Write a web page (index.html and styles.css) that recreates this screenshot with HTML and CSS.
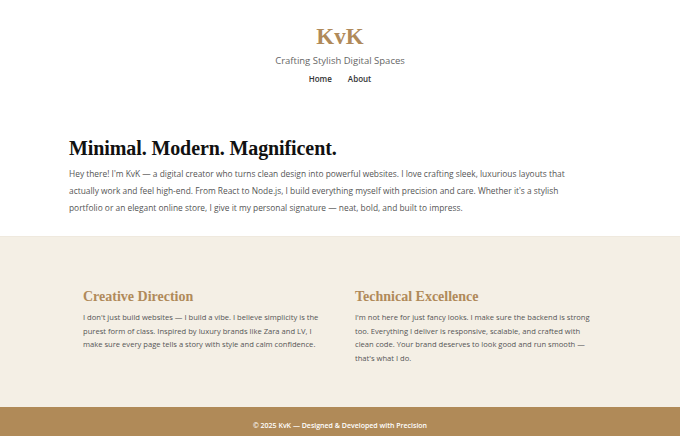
FILE: index.html
```html
<!DOCTYPE html>
<html lang="en">
<head>
<meta charset="utf-8">
<title>KvK</title>
<link rel="stylesheet" href="styles.css">
</head>
<body>
<header class="site-header">
  <h1 class="logo">KvK</h1>
  <p class="tagline">Crafting Stylish Digital Spaces</p>
  <nav class="nav">
    <a href="#">Home</a>
    <a href="#">About</a>
  </nav>
</header>
<section class="hero">
  <div class="container">
    <h2 class="hero-title">Minimal. Modern. Magnificent.</h2>
    <p class="hero-text">Hey there! I'm KvK — a digital creator who turns clean design into powerful websites. I love crafting sleek, luxurious layouts that actually work and feel high-end. From React to Node.js, I build everything myself with precision and care. Whether it's a stylish portfolio or an elegant online store, I give it my personal signature — neat, bold, and built to impress.</p>
  </div>
</section>
<section class="features">
  <div class="feature-grid">
    <div class="feature">
      <h3>Creative Direction</h3>
      <p>I don't just build websites — I build a vibe. I believe simplicity is the purest form of class. Inspired by luxury brands like Zara and LV, I make sure every page tells a story with style and calm confidence.</p>
    </div>
    <div class="feature">
      <h3>Technical Excellence</h3>
      <p>I'm not here for just fancy looks. I make sure the backend is strong too. Everything I deliver is responsive, scalable, and crafted with clean code. Your brand deserves to look good and run smooth — that's what I do.</p>
    </div>
  </div>
</section>
<footer class="site-footer">© 2025 KvK — Designed &amp; Developed with Precision</footer>
</body>
</html>
```
FILE: styles.css
```css
* { box-sizing: border-box; }
html, body { margin: 0; padding: 0; }
body {
  background: #ffffff;
  font-family: "Open Sans", "Noto Sans", sans-serif;
  color: #555;
}
.site-header {
  display: flex;
  flex-direction: column;
  align-items: center;
  padding-top: 22px;
}
.logo {
  margin: 0;
  font-family: "Liberation Serif", "DejaVu Serif", serif;
  font-weight: 700;
  font-size: 23px;
  line-height: 30px;
  color: #b08a5a;
}
.tagline {
  margin: 2px 0 0;
  font-size: 9.5px;
  line-height: 14px;
  color: #666;
}
.nav {
  display: flex;
  gap: 16px;
  margin-top: 5px;
}
.nav a {
  font-size: 8px;
  line-height: 12px;
  font-weight: 600;
  color: #333;
  text-decoration: none;
}
.container {
  max-width: 542px;
  margin: 0 auto;
}
.hero {
  padding: 50px 0 20px;
}
.hero-title {
  margin: 0;
  font-family: "Liberation Serif", "DejaVu Serif", serif;
  font-weight: 700;
  font-size: 20px;
  line-height: 26px;
  letter-spacing: -0.1px;
  color: #111;
}
.hero-text {
  margin: 4px 0 0;
  font-size: 8.4px;
  line-height: 17px;
  color: #555;
  padding-right: 30px;
}
.features {
  background: #f4efe5;
  padding: 50px 0 42px;
  border-top: 1px solid #efe9de;
}
.feature-grid {
  max-width: 514px;
  margin: 0 auto;
  display: grid;
  grid-template-columns: 1fr 1fr;
  gap: 30px;
}
.feature h3 {
  margin: 0;
  font-family: "Liberation Serif", "DejaVu Serif", serif;
  font-weight: 700;
  font-size: 14px;
  line-height: 20px;
  color: #b08a5a;
}
.feature p {
  margin: 4px 0 0;
  font-size: 7.6px;
  line-height: 13.5px;
  color: #555;
}
.site-footer {
  background: #b08a58;
  color: #fff;
  text-align: center;
  font-size: 7px;
  font-weight: 600;
  height: 29px;
  line-height: 38px;
}
```
